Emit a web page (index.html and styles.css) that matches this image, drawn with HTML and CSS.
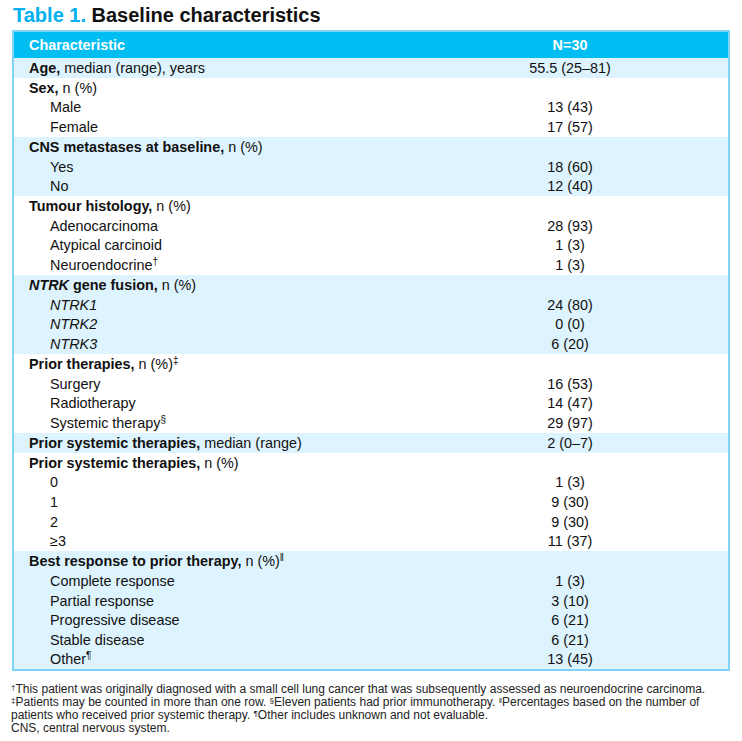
FILE: index.html
```html
<!DOCTYPE html>
<html lang="en">
<head>
<meta charset="utf-8">
<title>Table 1. Baseline characteristics</title>
<link rel="stylesheet" href="styles.css">
</head>
<body>
<div class="page">
  <h1 class="title"><span class="num">Table 1.</span> Baseline characteristics</h1>
  <table class="bt">
    <thead>
      <tr><th class="c1">Characteristic</th><th class="c2">N=30</th></tr>
    </thead>
    <tbody class="shade">
      <tr><td class="c1"><b>Age,</b> median (range), years</td><td class="c2">55.5 (25–81)</td></tr>
    </tbody>
    <tbody>
      <tr><td class="c1"><b>Sex,</b> n (%)</td><td class="c2"></td></tr>
      <tr><td class="c1 ind">Male</td><td class="c2">13 (43)</td></tr>
      <tr><td class="c1 ind">Female</td><td class="c2">17 (57)</td></tr>
    </tbody>
    <tbody class="shade">
      <tr><td class="c1"><b>CNS metastases at baseline,</b> n (%)</td><td class="c2"></td></tr>
      <tr><td class="c1 ind">Yes</td><td class="c2">18 (60)</td></tr>
      <tr><td class="c1 ind">No</td><td class="c2">12 (40)</td></tr>
    </tbody>
    <tbody>
      <tr><td class="c1"><b>Tumour histology,</b> n (%)</td><td class="c2"></td></tr>
      <tr><td class="c1 ind">Adenocarcinoma</td><td class="c2">28 (93)</td></tr>
      <tr><td class="c1 ind">Atypical carcinoid</td><td class="c2">1 (3)</td></tr>
      <tr><td class="c1 ind">Neuroendocrine<sup>†</sup></td><td class="c2">1 (3)</td></tr>
    </tbody>
    <tbody class="shade">
      <tr><td class="c1"><b><i>NTRK</i> gene fusion,</b> n (%)</td><td class="c2"></td></tr>
      <tr><td class="c1 ind"><i>NTRK1</i></td><td class="c2">24 (80)</td></tr>
      <tr><td class="c1 ind"><i>NTRK2</i></td><td class="c2">0 (0)</td></tr>
      <tr><td class="c1 ind"><i>NTRK3</i></td><td class="c2">6 (20)</td></tr>
    </tbody>
    <tbody>
      <tr><td class="c1"><b>Prior therapies,</b> n (%)<sup>‡</sup></td><td class="c2"></td></tr>
      <tr><td class="c1 ind">Surgery</td><td class="c2">16 (53)</td></tr>
      <tr><td class="c1 ind">Radiotherapy</td><td class="c2">14 (47)</td></tr>
      <tr><td class="c1 ind">Systemic therapy<sup>§</sup></td><td class="c2">29 (97)</td></tr>
    </tbody>
    <tbody class="shade">
      <tr><td class="c1"><b>Prior systemic therapies,</b> median (range)</td><td class="c2">2 (0–7)</td></tr>
    </tbody>
    <tbody>
      <tr><td class="c1"><b>Prior systemic therapies,</b> n (%)</td><td class="c2"></td></tr>
      <tr><td class="c1 ind">0</td><td class="c2">1 (3)</td></tr>
      <tr><td class="c1 ind">1</td><td class="c2">9 (30)</td></tr>
      <tr><td class="c1 ind">2</td><td class="c2">9 (30)</td></tr>
      <tr><td class="c1 ind">≥3</td><td class="c2">11 (37)</td></tr>
    </tbody>
    <tbody class="shade">
      <tr><td class="c1"><b>Best response to prior therapy,</b> n (%)<sup>‖</sup></td><td class="c2"></td></tr>
      <tr><td class="c1 ind">Complete response</td><td class="c2">1 (3)</td></tr>
      <tr><td class="c1 ind">Partial response</td><td class="c2">3 (10)</td></tr>
      <tr><td class="c1 ind">Progressive disease</td><td class="c2">6 (21)</td></tr>
      <tr><td class="c1 ind">Stable disease</td><td class="c2">6 (21)</td></tr>
      <tr><td class="c1 ind">Other<sup>¶</sup></td><td class="c2">13 (45)</td></tr>
    </tbody>
  </table>
  <div class="notes">
    <p><sup>†</sup>This patient was originally diagnosed with a small cell lung cancer that was subsequently assessed as neuroendocrine carcinoma.<br><sup>‡</sup>Patients may be counted in more than one row. <sup>§</sup>Eleven patients had prior immunotherapy. <sup>‖</sup>Percentages based on the number of patients who received prior systemic therapy. <sup>¶</sup>Other includes unknown and not evaluable.</p>
    <p>CNS, central nervous system.</p>
  </div>
</div>
</body>
</html>
```

FILE: styles.css
```css
html, body {
  margin: 0;
  padding: 0;
  background: #ffffff;
}

body {
  font-family: "Liberation Sans", Arial, sans-serif;
  color: #111111;
}

.page {
  padding: 4px 0 0 12px;
  width: 718px;
}

.title {
  margin: 0 0 3px 1px;
  font-size: 20px;
  line-height: 23px;
  font-weight: bold;
  color: #111111;
}

.title .num {
  color: #00b0ef;
}

.bt {
  width: 718px;
  border-collapse: collapse;
  border: 2px solid #7fd5f6;
  font-size: 14.4px;
  table-layout: fixed;
}

.bt th,
.bt td {
  padding: 0;
  white-space: nowrap;
}

.bt thead tr {
  background: #00bef2;
  height: 27px;
}

.bt th {
  color: #ffffff;
  font-weight: bold;
  text-align: left;
  vertical-align: middle;
}

.bt th.c2 {
  text-align: center;
}

.bt tbody tr {
  height: 19.74px;
}

.bt .c1 {
  width: 383px;
  padding-left: 15px;
}

.bt td.ind {
  padding-left: 36px;
}

.bt .c2 {
  text-align: center;
}

.bt td {
  vertical-align: middle;
  line-height: 16px;
}

.bt tbody.shade {
  background: #ddf3fd;
}

.bt sup {
  font-size: 10px;
  line-height: 0;
  vertical-align: 5px;
}

.notes {
  margin-top: 12px;
  font-size: 12px;
  line-height: 13.2px;
  color: #222222;
  margin-left: -1px;
}

.notes p {
  margin: 0;
}

.notes sup {
  font-size: 8px;
  line-height: 0;
  vertical-align: 3px;
}
```
